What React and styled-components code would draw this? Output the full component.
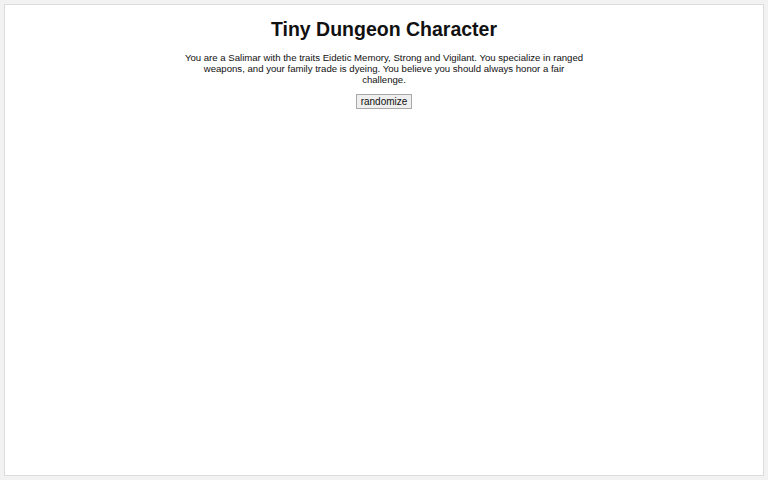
import React, { useState } from "react";
import styled, { createGlobalStyle } from "styled-components";

const Global = createGlobalStyle`
  html, body {
    margin: 0;
    padding: 0;
    height: 100%;
    background: #f2f2f2;
  }
  #root {
    height: 100%;
  }
`;

const Page = styled.div`
  box-sizing: border-box;
  height: 100%;
  padding: 4px;
  display: flex;
`;

const Card = styled.main`
  flex: 1;
  background: #ffffff;
  border: 1px solid #dcdcdc;
  display: flex;
  flex-direction: column;
  align-items: center;
  font-family: "Liberation Sans", Arial, sans-serif;
  color: #111;
`;

const Title = styled.h1`
  margin: 13px 0 0;
  font-size: 19.5px;
  font-weight: bold;
  line-height: 22px;
`;

const Story = styled.p`
  margin: 12px 0 0;
  max-width: 402px;
  font-size: 9.6px;
  line-height: 11px;
  text-align: center;
`;

const Button = styled.button`
  margin-top: 9px;
  font-family: "Liberation Sans", Arial, sans-serif;
  font-size: 10px;
  line-height: 11px;
  padding: 1px 4px;
  background: #efefef;
  border: 1px solid #a8a8a8;
  border-radius: 0;
  color: #111;
  cursor: pointer;
`;

const races = ["Salimar", "Human", "Dwarf", "Elf", "Goblin"];

export default function App() {
  const [race, setRace] = useState(0);
  return (
    <Page>
      <Global />
      <Card>
        <Title>Tiny Dungeon Character</Title>
        <Story>
          You are a {races[race]} with the traits Eidetic Memory, Strong and Vigilant. You
          specialize in ranged weapons, and your family trade is dyeing. You believe you
          should always honor a fair challenge.
        </Story>
        <Button onClick={() => setRace((race + 1) % races.length)}>randomize</Button>
      </Card>
    </Page>
  );
}
